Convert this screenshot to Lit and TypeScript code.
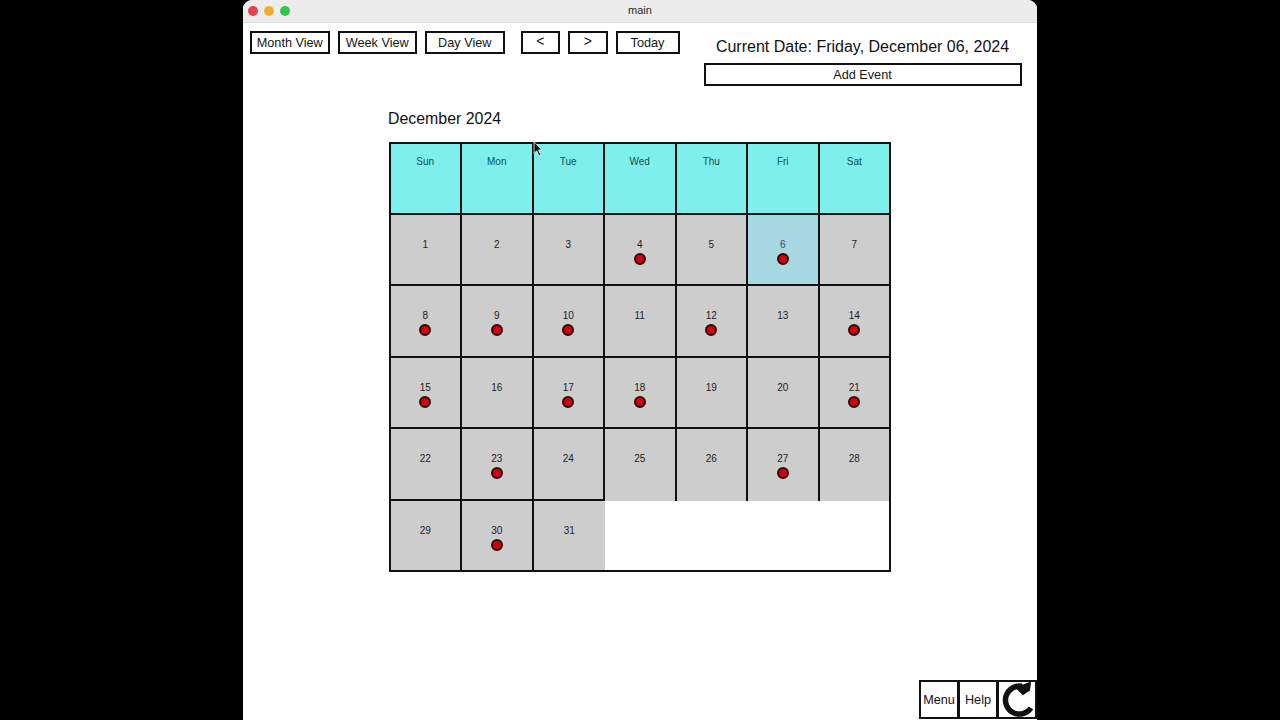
import { LitElement, html, css, svg } from "lit";
import { customElement } from "lit/decorators.js";

const HEAD = ["Sun", "Mon", "Tue", "Wed", "Thu", "Fri", "Sat"];
const EVENTS = new Set([4, 6, 8, 9, 10, 12, 14, 15, 17, 18, 21, 23, 27, 30]);
const DAYS = Array.from({ length: 31 }, (_, i) => i + 1);

@customElement("app-root")
export class AppRoot extends LitElement {
  static styles = css`
    :host {
      display: flex;
      justify-content: center;
      width: 1280px;
      height: 720px;
      background: #000;
      overflow: hidden;
      font-family: "Liberation Sans", Arial, sans-serif;
      color: #111;
    }
    .window {
      position: relative;
      width: 794px;
      height: 720px;
      background: #fff;
      border-radius: 9px 9px 0 0;
      overflow: hidden;
      display: flex;
      flex-direction: column;
    }
    .titlebar {
      flex: none;
      height: 23px;
      padding-bottom: 3px;
      background: #ececec;
      border-bottom: 1px solid #dcdcdc;
      box-sizing: border-box;
      display: flex;
      align-items: center;
      justify-content: center;
      position: relative;
      font-size: 11px;
      color: #2a2a2a;
    }
    .lights {
      position: absolute;
      left: 5px;
      top: 6px;
      display: flex;
      gap: 6px;
    }
    .light {
      width: 10px;
      height: 10px;
      border-radius: 50%;
    }
    .red { background: #e5444f; }
    .yellow { background: #efae2e; }
    .green { background: #2fc84a; }
    .toolbar {
      flex: none;
      display: flex;
      height: 89px;
      box-sizing: border-box;
      padding: 8px 0 0 7px;
    }
    .btn {
      box-sizing: border-box;
      height: 23px;
      border: 2px solid #111;
      background: #fff;
      display: flex;
      align-items: center;
      justify-content: center;
      font-size: 12.7px;
      color: #151515;
    }
    .nav {
      display: flex;
      align-items: flex-start;
    }
    .w80 { width: 79.5px; }
    .w40 { width: 39.5px; }
    .w64 { width: 64px; }
    .ml8 { margin-left: 8px; }
    .ml16 { margin-left: 16px; }
    .arrow { padding-bottom: 3px; font-size: 14px; }
    .right {
      margin-left: 24px;
      width: 318px;
      display: flex;
      flex-direction: column;
      align-items: stretch;
    }
    .date {
      height: 32px;
      box-sizing: border-box;
      padding-top: 5px;
      display: flex;
      align-items: flex-start;
      justify-content: center;
      font-size: 16px;
      line-height: 22px;
      color: #111;
    }
    .main {
      flex: none;
      padding-left: 145px;
      display: flex;
      flex-direction: column;
    }
    .month {
      font-size: 15.9px;
      line-height: 20px;
      margin-top: -3px;
      height: 32.5px;
      box-sizing: border-box;
      color: #111;
    }
    .grid {
      box-sizing: border-box;
      margin-left: 0.5px;
      width: fit-content;
      border-top: 2px solid #111;
      border-left: 2px solid #111;
      display: grid;
      grid-template-columns: repeat(7, 71.5px);
      grid-template-rows: repeat(6, 71.45px);
      background: #fff;
    }
    .cell {
      box-sizing: border-box;
      border-right: 2px solid #111;
      border-bottom: 2px solid #111;
      background: #cdcdcd;
      font-size: 10px;
      color: #1c1c1c;
      display: flex;
      flex-direction: column;
      align-items: center;
      padding-top: 24px;
      line-height: 12px;
    }
    .head {
      background: #7ef0ec;
      color: #0d4f52;
      padding-top: 12px;
    }
    .today { background: #a5d8e0; color: #2a4a55; }
    .noright { border-right: none; }
    .nobottom { border-bottom: none; }
    .filler {
      grid-column: span 4;
      box-sizing: border-box;
      border-right: 2px solid #111;
      border-bottom: 2px solid #111;
      background: #fff;
    }
    .dot {
      box-sizing: border-box;
      width: 12px;
      height: 12px;
      margin-top: 2px;
      border-radius: 50%;
      background: #d0000f;
      border: 2px solid #2a0a0a;
    }
    .corner {
      position: absolute;
      right: 0;
      bottom: 1px;
      display: flex;
      height: 39px;
    }
    .corner .btn {
      height: 39px;
      width: 40px;
      margin-left: -1px;
    }
    .refresh {
      padding: 0;
      overflow: hidden;
      justify-content: flex-start;
    }
    .refresh svg { display: block; flex: none; }
    .cursor {
      position: absolute;
      left: 289.5px;
      top: 141px;
      width: 11px;
      height: 16px;
    }
  `;

  private cell(d: number) {
    const cls = ["cell"];
    if (d === 6) cls.push("today");
    if (d === 31) cls.push("noright");
    if (d >= 25 && d <= 28) cls.push("nobottom");
    return html`<div class=${cls.join(" ")}>
      <span>${d}</span>${EVENTS.has(d) ? html`<div class="dot"></div>` : ""}
    </div>`;
  }

  render() {
    return html`<div class="window">
      <div class="titlebar">
        <div class="lights">
          <div class="light red"></div>
          <div class="light yellow"></div>
          <div class="light green"></div>
        </div>
        main
      </div>
      <div class="toolbar">
        <div class="nav">
          <div class="btn w80">Month View</div>
          <div class="btn w80 ml8">Week View</div>
          <div class="btn w80 ml8">Day View</div>
          <div class="btn w40 ml16 arrow">&lt;</div>
          <div class="btn w40 ml8 arrow">&gt;</div>
          <div class="btn w64 ml8">Today</div>
        </div>
        <div class="right">
          <div class="date">Current Date: Friday, December 06, 2024</div>
          <div class="btn">Add Event</div>
        </div>
      </div>
      <div class="main">
        <div class="month">December 2024</div>
        <div class="grid">
          ${HEAD.map((h) => html`<div class="cell head">${h}</div>`)}
          ${DAYS.map((d) => this.cell(d))}
          <div class="filler"></div>
        </div>
      </div>
      <div class="corner">
        <div class="btn">Menu</div>
        <div class="btn">Help</div>
        <div class="btn refresh">
          <svg width="38" height="35" viewBox="0 0 38 35">
            ${svg`<path d="M23 4.3 A14 14 0 1 0 32 26" fill="none" stroke="#111" stroke-width="5.5"/>
            <path d="M18 6 L31 1 L30 8 L24 12 Z" fill="#111" stroke="#111" stroke-width="2" stroke-linejoin="round"/>`}
          </svg>
        </div>
      </div>
      <svg class="cursor" viewBox="0 0 12 18">
        ${svg`<path d="M1 1 L1 14 L4 11 L6.5 16.5 L8.5 15.5 L6 10 L10 10 Z" fill="#111" stroke="#fff" stroke-width="0.8"/>`}
      </svg>
    </div>`;
  }
}
